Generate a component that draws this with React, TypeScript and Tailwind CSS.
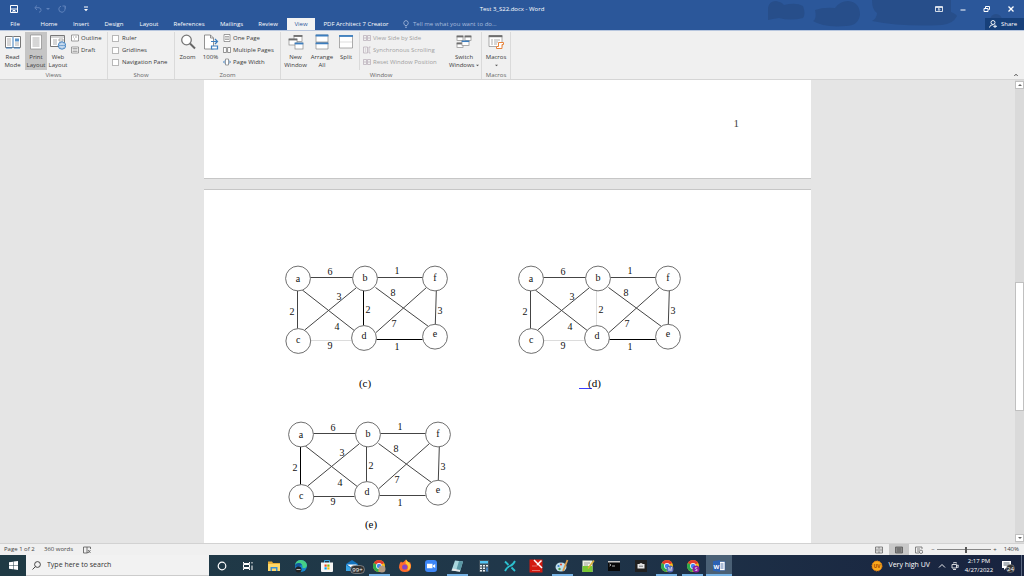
import type { ReactNode } from "react";
import clsx from "clsx";

// x, y of the circle, then the baseline of its letter
const nodes: Record<string, [number, number, number]> = {
  a: [14, 16.5, 19.5],
  b: [81, 16.5, 19],
  f: [151, 16.5, 19],
  c: [14.3, 79, 81],
  d: [80, 76, 77],
  e: [151, 74.7, 75],
};

const edges: Record<string, [number, number, number, number]> = {
  ab: [26.5, 15.5, 68.5, 15.5],
  bf: [93.5, 15.5, 138.5, 15.5],
  ac: [13.5, 29, 13.5, 66.5],
  bd: [79.5, 29, 79.5, 63.5],
  de: [92.5, 77.5, 138.5, 77.5],
  cd: [27, 78.5, 67.5, 78.5],
  fe: [152.3, 29, 151.3, 62],
  ad: [18.3, 28, 70, 68.3],
  cb: [20.7, 68, 72, 26],
  be: [91.5, 25.5, 144.5, 64.5],
  fd: [142.5, 25.5, 92, 70.5],
};

const weights: [string, number, number][] = [
  ["6", 46, 13],
  ["1", 113, 12],
  ["8", 109, 34],
  ["3", 55, 38],
  ["2", 8, 53],
  ["2", 84, 51],
  ["4", 53, 68],
  ["7", 110, 65],
  ["9", 46, 87],
  ["1", 113, 88],
  ["3", 156, 52],
];

const Graph = ({ faint = [], bold = [] }: { faint?: string[]; bold?: string[] }) => (
  <svg className="block w-[168px] h-[96px]" viewBox="0 0 168 96">
    {Object.entries(edges).map(([name, [x1, y1, x2, y2]]) => (
      <line
        key={name}
        x1={x1}
        y1={y1}
        x2={x2}
        y2={y2}
        stroke={
          faint.includes(name) ? "#dcdcdc" : bold.includes(name) ? "#000" : "#444"
        }
        strokeWidth="1"
      />
    ))}
    {Object.entries(nodes).map(([name, [x, y, baseline]]) => (
      <g key={name}>
        <circle cx={x} cy={y} r="12.4" fill="#fff" stroke="#4a4a4a" strokeWidth="0.8" />
        <text
          x={x}
          y={baseline}
          textAnchor="middle"
          className="text-[10px]"
          fill="#111"
        >
          {name}
        </text>
      </g>
    ))}
    {weights.map(([label, x, y]) => (
      <text
        key={`${x}-${y}`}
        x={x}
        y={y}
        textAnchor="middle"
        className="text-[10px]"
        fill="#111"
      >
        {label}
      </text>
    ))}
  </svg>
);

/* ---------- title bar and tabs ---------- */

const TitleBar = () => (
  <div className="relative grid grid-cols-3 h-[18px] items-center text-white">
    <div className="flex items-center pl-0.5">
      <button aria-label="Save" className="flex w-6 justify-center">
        <svg className="w-2 h-2" viewBox="0 0 8 8" fill="none" stroke="#fff">
          <path d="M.5.5h7v7h-7zM.5 4h7M3 7.500v-2h2v2" />
        </svg>
      </button>
      <button aria-label="Undo" className="flex w-6 items-center gap-1 pl-2">
        <svg className="w-2 h-2 shrink-0" viewBox="0 0 8 8" fill="none" stroke="#5f82bb">
          <path d="M3 .5L.8 2.700 3 5M1 2.700h4q2.500.3 2 3-.4 1.300-2 1.500" />
        </svg>
        <svg className="w-1 h-1 shrink-0" viewBox="0 0 4 4" fill="#5f82bb">
          <path d="M0 1h4L2 3z" />
        </svg>
      </button>
      <button aria-label="Redo" className="flex w-6 justify-center">
        <svg className="w-2 h-2" viewBox="0 0 8 8" fill="none" stroke="#5f82bb">
          <path d="M4.500 1H7.300V3.800M7 1.300Q7.800 6.800 4 7.300.6 7 .8 4 1 1.800 3 1.200" />
        </svg>
      </button>
      <button
        aria-label="Customize Quick Access Toolbar"
        className="flex w-6 justify-center"
      >
        <svg className="w-1 h-1.5" viewBox="0 0 4 6" fill="#fff">
          <path d="M0 .5h4v1H0zM0 3h4L2 5.200z" />
        </svg>
      </button>
    </div>
    <h1 className="text-center text-[6px]">Test 3_S22.docx - Word</h1>
    <div className="flex items-center justify-end gap-4 pr-[9px]">
      <button aria-label="Ribbon Display Options">
        <svg className="w-2 h-2" viewBox="0 0 8 8" fill="none" stroke="#fff">
          <path d="M.5 1.500h7v5h-7zM.5 2.500h7M4 6V3.500M2.800 4.700L4 3.500l1.200 1.200" strokeWidth=".8" />
        </svg>
      </button>
      <button aria-label="Minimize">
        <svg className="w-2 h-2" viewBox="0 0 8 8" fill="none" stroke="#fff">
          <path d="M1.500 5h5" />
        </svg>
      </button>
      <button aria-label="Restore">
        <svg className="w-2 h-2" viewBox="0 0 8 8" fill="none" stroke="#fff">
          <path d="M1 3.500h4v3H1zM2.500 3V1.500h4v3H5.500" />
        </svg>
      </button>
      <button aria-label="Close">
        <svg className="w-2 h-2" viewBox="0 0 8 8" fill="none" stroke="#fff">
          <path d="M1.500 1.500l5 5M6.500 1.500l-5 5" strokeWidth="1.300" />
        </svg>
      </button>
    </div>
  </div>
);

const tabs = [
  { name: "File", width: "w-[30px]" },
  { name: "Home", width: "w-[38px]" },
  { name: "Insert", width: "w-[26px]" },
  { name: "Design", width: "w-[40px]" },
  { name: "Layout", width: "w-[30px]" },
  { name: "References", width: "w-[50px]" },
  { name: "Mailings", width: "w-[35px]" },
  { name: "Review", width: "w-[38px]" },
  { name: "View", width: "w-[28px]" },
  { name: "PDF Architect 7 Creator", width: "w-[82px]" },
];

const Tabs = () => (
  <nav className="relative flex h-3 text-[6px] text-white">
    {tabs.map((tab) => (
      <button
        key={tab.name}
        className={clsx(
          "shrink-0 whitespace-nowrap leading-3",
          tab.width,
          tab.name === "View" && "bg-[#f3f3f3] text-[#2b579a]"
        )}
      >
        {tab.name}
      </button>
    ))}
    <button className="flex items-center gap-1 pl-1.5 text-[#a9bddd]">
      <svg className="w-1.5 h-2" viewBox="0 0 6 8" fill="none" stroke="currentColor">
        <path d="M2 5.500Q.5 4 .8 2.500 1.300.6 3 .6T5.200 2.500Q5.500 4 4 5.500zM2 7.200h2" strokeWidth=".8" />
      </svg>
      Tell me what you want to do...
    </button>
    <button className="ml-auto flex w-[39px] items-center gap-1 bg-[#17407a] pl-1">
      <svg className="w-2 h-2" viewBox="0 0 8 8" fill="none" stroke="#fff" strokeWidth=".9">
        <circle cx="4" cy="2.500" r="2" />
        <path d="M.5 7.500Q.8 4.800 4 4.700M6 4.500v3.500M4.200 6.300H8" />
      </svg>
      Share
    </button>
  </nav>
);

/* ---------- ribbon ---------- */

const Caret = () => (
  <svg className="inline-block w-[3px] h-[3px]" viewBox="0 0 4 4" fill="#555">
    <path d="M0 1h4L2 3z" />
  </svg>
);

const Group = ({
  label,
  className,
  children,
}: {
  label: string;
  className: string;
  children: ReactNode;
}) => (
  <section
    className={clsx("flex shrink-0 flex-col border-r border-[#dadada]", className)}
  >
    <div className="flex h-[38px]">{children}</div>
    <h2 className="pt-px text-center leading-[8px] text-[#666]">{label}</h2>
  </section>
);

const BigButton = ({
  lines,
  width,
  active,
  children,
}: {
  lines: ReactNode[];
  width: string;
  active?: boolean;
  children: ReactNode;
}) => (
  <button
    className={clsx(
      "flex shrink-0 flex-col items-center gap-[3px] whitespace-nowrap pt-0.5 leading-[8px]",
      width,
      active && "bg-[#c5c5c5]"
    )}
  >
    <svg className="block w-4 h-4 shrink-0" viewBox="0 0 16 16" fill="none">
      {children}
    </svg>
    <span>
      {lines.map((line, i) => (
        <span key={i} className="block">
          {line}
        </span>
      ))}
    </span>
  </button>
);

const SmallButton = ({
  label,
  disabled,
  children,
}: {
  label: string;
  disabled?: boolean;
  children: ReactNode;
}) => (
  <button
    disabled={disabled}
    className={clsx(
      "flex h-3 items-center gap-0.5 whitespace-nowrap",
      disabled && "text-[#a0a0a0]"
    )}
  >
    <svg className="w-2 h-2 shrink-0" viewBox="0 0 8 8" fill="none">
      {children}
    </svg>
    {label}
  </button>
);

const Windowed = ({ x, y, w, h }: { x: number; y: number; w: number; h: number }) => (
  <>
    <rect x={x} y={y} width={w} height={h} fill="#fff" stroke="#8a8a8a" strokeWidth=".7" />
    <path d={`M${x - 0.3} ${y + 0.5}h${w + 0.6}`} stroke="#6e6e6e" strokeWidth="1.800" />
  </>
);

const Ribbon = () => (
  <div className="flex h-[50px] shrink-0 border-y border-t-[#b7c6de] border-b-[#d5d5d5] bg-[#f0f0f0] pt-px text-[6px] text-[#3a3a3a]">
    <Group label="Views" className="w-[108px]">
      <BigButton lines={["Read", "Mode"]} width="w-[25px]">
        <path d="M.5 2.500h7l.5.500.5-.5h7v11h-7l-.5.500-.5-.5h-7z" fill="#fff" stroke="#777" />
        <path d="M8 3v11" stroke="#3c7ebf" />
        <path d="M2 5h4M2 7h4M2 9h4M2 11h4M10 9h4M10 11h4" stroke="#9a9a9a" strokeWidth=".8" />
        <path d="M10 4.500h4v3h-4z" fill="#5a94cb" />
        <path d="M1 14h6M9 14h6" stroke="#3c7ebf" />
      </BigButton>
      <BigButton lines={["Print", "Layout"]} width="w-[22px]" active>
        <path d="M2.500 1h11v14h-11z" fill="#fff" stroke="#8a8a8a" strokeWidth=".7" />
        <path d="M4.500 4h7M4.500 6h7M4.500 8h7M4.500 10h7M4.500 12h7" stroke="#999" strokeWidth=".8" />
      </BigButton>
      <BigButton lines={["Web", "Layout"]} width="w-[22px]">
        <path d="M.5 1.500h14v11H.5z" fill="#fff" stroke="#777" />
        <path d="M1 3h13M3 6h4M3 8h4M3 10h4M9 5h4v2H9z" stroke="#999" strokeWidth=".8" />
        <circle cx="12" cy="11.500" r="3.700" fill="#fff" stroke="#3c7ebf" />
        <path d="M8.500 11.500h7M12 8v7M10.300 9q-1 2.500 0 5M13.700 9q1 2.500 0 5" stroke="#3c7ebf" strokeWidth=".6" />
      </BigButton>
      <div className="flex flex-col pl-0.5">
        <SmallButton label="Outline">
          <path d="M.5 1h7v6h-7z" fill="#fff" stroke="#777" strokeWidth=".7" />
          <path d="M2 3h1M4 3h2M3 5h1" stroke="#888" strokeWidth=".7" />
        </SmallButton>
        <SmallButton label="Draft">
          <path d="M.5 1h7v6h-7z" fill="#fff" stroke="#777" strokeWidth=".7" />
          <path d="M1.500 2.500h5M1.500 4h5M1.500 5.500h5" stroke="#888" strokeWidth=".7" />
        </SmallButton>
      </div>
    </Group>

    <Group label="Show" className="w-[67px]">
      <div className="flex flex-col pl-1">
        {["Ruler", "Gridlines", "Navigation Pane"].map((item) => (
          <label key={item} className="flex h-3 items-center gap-[3px] whitespace-nowrap">
            <input
              type="checkbox"
              className="h-[7px] w-[7px] appearance-none border border-[#b8b8b8] bg-white"
            />
            {item}
          </label>
        ))}
      </div>
    </Group>

    <Group label="Zoom" className="w-[106px]">
      <BigButton lines={["Zoom"]} width="w-[25px]">
        <circle cx="6.500" cy="6" r="4.800" fill="#fff" stroke="#777" strokeWidth="1.300" />
        <path d="M10 9.500l5 5" stroke="#666" strokeWidth="2" />
      </BigButton>
      <BigButton lines={["100%"]} width="w-[21px]">
        <path d="M1.500 1h6l3 3v11h-9z" fill="#fff" stroke="#777" strokeWidth=".8" />
        <path d="M7.500 1v3h3" stroke="#777" strokeWidth=".8" />
        <path d="M8 7.500h6M12 5l2.500 2.500L12 10" stroke="#3c7ebf" strokeWidth="1.200" />
        <path d="M8.500 12h6v3h-6z" fill="#fff" stroke="#3c7ebf" strokeWidth="1.200" />
      </BigButton>
      <div className="flex flex-col pl-0.5">
        <SmallButton label="One Page">
          <path d="M1 .5h6v7H1z" fill="#fff" stroke="#777" strokeWidth=".7" />
          <path d="M2 2.500h4M2 4h4M2 5.500h4" stroke="#888" strokeWidth=".7" />
        </SmallButton>
        <SmallButton label="Multiple Pages">
          <path d="M.4 1.500h3v5h-3zM4.600 1.500h3v5h-3z" fill="#fff" stroke="#666" strokeWidth=".7" />
        </SmallButton>
        <SmallButton label="Page Width">
          <path d="M2.500 1h3v6h-3z" fill="#fff" stroke="#777" strokeWidth=".7" />
          <path d="M2 2.500L.5 4 2 5.500M6 2.500L7.500 4 6 5.500" stroke="#3c7ebf" />
        </SmallButton>
      </div>
    </Group>

    <Group label="Window" className="w-[201px]">
      <BigButton lines={["New", "Window"]} width="w-[29px]">
        <Windowed x={6} y={1.5} w={8} h={6} />
        <Windowed x={1} y={5} w={8} h={6} />
        <rect x="7" y="9" width="8" height="6" fill="#fff" stroke="#8a8a8a" strokeWidth=".7" />
        <path d="M6.700 9.500h8.600" stroke="#3c7ebf" strokeWidth="1.800" />
      </BigButton>
      <BigButton lines={["Arrange", "All"]} width="w-[24px]">
        <path d="M2 1h12v7H2zM2 8.500h12v6.500H2z" fill="#fff" stroke="#8a8a8a" strokeWidth=".7" />
        <path d="M1.600 1.500h12.800M1.600 9.300h12.800" stroke="#3c7ebf" strokeWidth="1.800" />
      </BigButton>
      <BigButton lines={["Split"]} width="w-[24px]">
        <path d="M1.500 1.500h13v12.500h-13z" fill="#fff" stroke="#8a8a8a" strokeWidth=".7" />
        <path d="M1 2h14" stroke="#3c7ebf" strokeWidth="1.800" />
        <path d="M2 8h12" stroke="#ddd" />
      </BigButton>
      <div className="ml-px flex w-[94px] flex-col border-l border-[#dadada] pl-[3px]">
        <SmallButton label="View Side by Side" disabled>
          <path d="M.5 1.500h3v5h-3zM4.500 1.500h3v5h-3zM2 3v2M6 3v2" stroke="#b5a9b5" strokeWidth=".7" />
        </SmallButton>
        <SmallButton label="Synchronous Scrolling" disabled>
          <path d="M.5 1h4v6h-4zM6 1h1.500M6 7h1.500M6 1v6M2 3h1M2 5h1" stroke="#b5a9b5" strokeWidth=".7" />
        </SmallButton>
        <SmallButton label="Reset Window Position" disabled>
          <path d="M.5 1.500h3v5h-3zM4.500 1.500h3v5h-3zM1 4h2M5 4h2" stroke="#b5a9b5" strokeWidth=".7" />
        </SmallButton>
      </div>
      <BigButton
        lines={[
          "Switch",
          <>
            Windows <Caret />
          </>,
        ]}
        width="w-[22px]"
      >
        <Windowed x={1} y={2} w={6} h={4.5} />
        <Windowed x={9} y={2} w={6} h={4.5} />
        <Windowed x={1} y={9} w={6} h={4.5} />
        <rect x="6" y="7" width="7" height="4.500" fill="#fff" stroke="#8a8a8a" strokeWidth=".7" />
        <path d="M5.700 7.300h7.600" stroke="#3c7ebf" strokeWidth="1.500" />
      </BigButton>
    </Group>

    <Group label="Macros" className="w-[29px]">
      <BigButton lines={["Macros", <Caret />]} width="w-[28px]">
        <path d="M1 1.500h13v11H1z" fill="#fff" stroke="#8a8a8a" strokeWidth=".7" />
        <path d="M.7 2.200h13.600" stroke="#6e6e6e" strokeWidth="2" />
        <path d="M3 6h2M6 6h6M3 8h2M6 8h4M3 10h2M6 10h3" stroke="#999" strokeWidth=".8" />
        <path d="M10.500 8.500h5v2h-1.500v4H8.500v-2h2z" fill="#fff" stroke="#e8833a" />
      </BigButton>
    </Group>

    <button aria-label="Collapse the Ribbon" className="mb-0.5 ml-auto mr-1.5 self-end">
      <svg className="w-1 h-1" viewBox="0 0 4 4" fill="none" stroke="#555">
        <path d="M.3 3L2 1.200 3.700 3" />
      </svg>
    </button>
  </div>
);

/* ---------- document ---------- */

const VerticalScroll = () => (
  <div className="flex w-[9px] shrink-0 flex-col bg-[#dadada] py-px">
    <button aria-label="Scroll up" className="flex h-2 items-center justify-center border border-[#c0c0c0] bg-white">
      <svg className="w-1 h-1" viewBox="0 0 4 4" fill="#666">
        <path d="M0 3h4L2 1z" />
      </svg>
    </button>
    <div className="flex-[193]" />
    <div className="flex-[128] border border-[#c0c0c0] bg-white" />
    <div className="flex-[123]" />
    <button aria-label="Scroll down" className="flex h-2 items-center justify-center border border-[#c0c0c0] bg-white">
      <svg className="w-1 h-1" viewBox="0 0 4 4" fill="#666">
        <path d="M0 1h4L2 3z" />
      </svg>
    </button>
  </div>
);

const Document = () => (
  <main className="flex min-h-0 flex-1 overflow-hidden bg-[#e5e5e5]">
    <div className="flex min-w-0 flex-1 flex-col items-center gap-2.5 overflow-hidden font-['Liberation_Serif',serif] text-[11px] text-black">
      <div className="flex h-[99px] w-[59.8%] shrink-0 items-start justify-end border-b border-[#c6c6c6] bg-white pr-[72px] pt-9 leading-[14px] text-[#444]">
        1
      </div>
      <div className="w-[59.8%] flex-1 border-t border-[#c6c6c6] bg-white pt-[72px]">
        <div className="flex gap-[65px] pl-20">
          <figure>
            <Graph faint={["cd"]} bold={["bd", "de"]} />
            <figcaption className="w-[162px] pt-[19px] text-center leading-3">(c)</figcaption>
          </figure>
          <figure>
            <Graph faint={["cd", "bd"]} bold={["de"]} />
            <figcaption className="w-[162px] pr-4 pt-[19px] text-center leading-3">
              <span className="-mr-1 inline-block h-3 w-[13px] border-b border-[#3b3bff] align-bottom" />
              (d)
            </figcaption>
          </figure>
        </div>
        <div className="flex pl-[83px] pt-[29px]">
          <figure>
            <Graph bold={["ac"]} />
            <figcaption className="w-[168px] pt-1 text-center leading-3">(e)</figcaption>
          </figure>
        </div>
      </div>
    </div>
    <VerticalScroll />
  </main>
);

const StatusBar = () => (
  <footer className="flex h-3 shrink-0 items-center border-t border-[#d2d2d2] bg-[#f0f0f0] pl-1 text-[6px] text-[#444]">
    <span className="w-10">Page 1 of 2</span>
    <span className="w-[39px]">360 words</span>
    <svg className="w-2 h-2" viewBox="0 0 8 8" fill="none" stroke="#555" strokeWidth=".8">
      <path d="M.5 1h3.500v6H.5zM4 1h3.500v2M4 7l1-.5M5 4l2.500 3M7.500 4L5 7" />
    </svg>
    <div className="ml-auto flex items-center self-stretch pr-[5px]">
      <button aria-label="Read Mode" className="flex w-5 justify-center">
        <svg className="w-2 h-2" viewBox="0 0 8 8" fill="none" stroke="#666" strokeWidth=".8">
          <path d="M.5 1H4v6H.5zM4 1h3.500v6H4M2 2.500v3M6 2.500v3" />
        </svg>
      </button>
      <button aria-label="Print Layout" className="flex w-5 items-center justify-center self-stretch bg-[#c8c8c8]">
        <svg className="w-2 h-2" viewBox="0 0 8 8" fill="#888" stroke="#555" strokeWidth=".8">
          <path d="M.5 1h7v6h-7zM2 3h4M2 5h4" />
        </svg>
      </button>
      <button aria-label="Web Layout" className="flex w-5 justify-center">
        <svg className="w-2 h-2" viewBox="0 0 8 8" fill="none" stroke="#666" strokeWidth=".8">
          <path d="M4 7H.5V1h6.500v2M2 3h3M2 5h2" />
          <circle cx="6" cy="5.800" r="1.700" />
        </svg>
      </button>
      <button aria-label="Zoom out" className="w-2 leading-3">−</button>
      <input
        type="range"
        aria-label="Zoom"
        min="10"
        max="270"
        defaultValue="150"
        className="h-px w-[54px] appearance-none bg-[#888] [&::-webkit-slider-thumb]:h-[6px] [&::-webkit-slider-thumb]:w-[2px] [&::-webkit-slider-thumb]:appearance-none [&::-webkit-slider-thumb]:bg-[#555]"
      />
      <button aria-label="Zoom in" className="w-2 leading-3">+</button>
      <span className="w-5 text-right">140%</span>
    </div>
  </footer>
);

/* ---------- taskbar ---------- */

const Chrome = ({ badge, letter }: { badge?: string; letter?: string }) => (
  <>
    <circle cx="7" cy="7" r="6" fill="#fbc116" />
    <path d="M7 7L1.800 4A6 6 0 0 1 12.200 4z" fill="#e33b2e" />
    <path d="M7 7L1.800 4A6 6 0 0 0 6.500 13z" fill="#2da94f" />
    <circle cx="7" cy="7" r="2.900" fill="#fff" />
    <circle cx="7" cy="7" r="2.200" fill="#4285f4" />
    {badge && <circle cx="10" cy="10" r="3.500" fill={badge} />}
    {letter && (
      <text x="10" y="12" textAnchor="middle" className="text-[5px]" fill="#fff">
        {letter}
      </text>
    )}
  </>
);

const apps: { name: string; state?: "open" | "active"; icon: ReactNode }[] = [
  {
    name: "Cortana",
    icon: <circle cx="7" cy="7" r="3.800" fill="none" stroke="#fff" strokeWidth="1.200" />,
  },
  {
    name: "Task View",
    icon: (
      <path d="M2.500 3v1.500h6V3M2.500 11V9.500h6V11M2.500 5.500h6v3h-6zM11 3v1.500M11 6.500v4.500" fill="none" stroke="#fff" />
    ),
  },
  {
    name: "File Explorer",
    icon: (
      <>
        <path d="M1 2.500h4l1 1.500h7v8H1z" fill="#e9ae36" />
        <path d="M1 5h12v7H1z" fill="#ffd969" />
        <path d="M3.500 12V8h7v4H9V9.500H5V12z" fill="#3c8fd6" />
      </>
    ),
  },
  {
    name: "Edge",
    icon: (
      <>
        <circle cx="7" cy="7" r="6" fill="#1687ce" />
        <path d="M1 6Q2 1 7 1q5.500.5 6 5.500-.5 3-4.500 2.500Q9 4.500 5 4 2 4 1 6z" fill="#45cf87" />
        <path d="M1 7q1-3 4-3 2 .2 3 2-3 0-2.500 3z" fill="#14589c" />
        <circle cx="4.500" cy="10.500" r="3" fill="#222" />
        <path d="M2.500 10.500h4" stroke="#bbb" />
      </>
    ),
  },
  {
    name: "Microsoft Store",
    icon: (
      <>
        <path d="M4.500 4V1.500h5V4" fill="none" stroke="#39a6dd" />
        <path d="M1 3.500h12V12q0 1-1 1H2q-1 0-1-1z" fill="#f5f5f5" />
        <path d="M4.500 5.500h2.200v2.200H4.500z" fill="#f25022" />
        <path d="M7.300 5.500h2.200v2.200H7.300z" fill="#7fba00" />
        <path d="M4.500 8.300h2.200v2.200H4.500z" fill="#00a4ef" />
        <path d="M7.300 8.300h2.200v2.200H7.300z" fill="#ffb900" />
      </>
    ),
  },
  {
    name: "Mail",
    icon: (
      <>
        <path d="M0 5l6-4 6 4v7H0z" fill="#1172be" />
        <path d="M1 5.500h10L6 9z" fill="#fff" />
        <path d="M0 6l6 4 6-4v6H0z" fill="#39a5e8" />
        <rect x="4.500" y="6.500" width="14" height="8" rx="4" fill="#333" stroke="#aaa" strokeWidth=".6" />
        <text x="11.500" y="12.500" textAnchor="middle" className="text-[6px]" fill="#fff">
          99+
        </text>
      </>
    ),
  },
  { name: "Google Chrome", state: "open", icon: <Chrome badge="#b49b83" /> },
  {
    name: "Firefox",
    icon: (
      <>
        <path d="M2 4l1-1.500 1 1Q6 3 8 .5q1 2 3 3l1-.5q1.500 3 1 5.500-1 4.500-6 4.500T1 8.500Q1 6 2 4z" fill="#ff6b2c" />
        <path d="M8 .5q1 2 3 3 2.500 3 1 6-1 1.500-3 2 2-2 1-4.500Q9 5 7.500 4.500z" fill="#ffc832" />
        <circle cx="6.700" cy="8" r="2.600" fill="#8547c7" />
      </>
    ),
  },
  {
    name: "Zoom",
    icon: (
      <>
        <rect x="1" y="1" width="12" height="12" rx="3" fill="#3d86f7" />
        <path d="M3 4.800h5.500v4.500H3zM9 6.500l2.200-1.500v4L9 7.700z" fill="#fff" />
      </>
    ),
  },
  {
    name: "Notepad",
    state: "open",
    icon: (
      <>
        <path d="M5 1.500l8 1-3 10-8.500-1z" fill="#a8d5dc" />
        <path d="M9 2l4 .5-3 10-4-.5z" fill="#5a98a5" />
        <path d="M1.500 11.500l1.500-2 7 1.500v1.700z" fill="#e8e8e8" />
      </>
    ),
  },
  {
    name: "Calculator",
    icon: (
      <>
        <path d="M2 1h10v12H2z" fill="#3e4f5c" />
        <path d="M3 2h8v2.500H3z" fill="#53c3f2" />
        <path d="M3 6h2v1.600H3zM6 6h2v1.600H6zM9 6h2v1.600H9zM3 8.500h2v1.600H3zM6 8.500h2v1.600H6zM3 11h2v1.500H3zM6 11h2v1.500H6z" fill="#e8eef2" />
        <path d="M9 8.500h2v4H9z" fill="#4c86c0" />
      </>
    ),
  },
  {
    name: "X",
    icon: (
      <path d="M2 2.500l3.500 3.500M8.500 8.500L12 12M12 2q-2 4-5 5t-5 5" fill="none" stroke="#2cc0cf" strokeWidth="1.800" />
    ),
  },
  {
    name: "PDF Architect",
    icon: (
      <>
        <path d="M.5.5h13v13H.5z" fill="#d3190f" />
        <path d="M5 1l8 8M12.500 1.500L8 6" stroke="#fff" strokeWidth="1.500" />
        <path d="M3 7h5M3 11.500h8" stroke="#ee8580" strokeWidth=".8" />
      </>
    ),
  },
  {
    name: "Paint",
    state: "open",
    icon: (
      <>
        <ellipse cx="6" cy="8" rx="5.500" ry="4.500" fill="#bfe0ee" />
        <circle cx="3.500" cy="7" r="1.100" fill="#3b80c8" />
        <circle cx="6" cy="5.500" r="1.100" fill="#e4553d" />
        <circle cx="4.500" cy="10" r="1.200" fill="#4f9e48" />
        <path d="M12.500 1L8 12" stroke="#d99a4d" strokeWidth="1.800" />
      </>
    ),
  },
  {
    name: "Notepad++",
    icon: (
      <>
        <path d="M1.500 1.500h10V13h-10z" fill="#f0f3e5" />
        <path d="M1.500 7h10v6h-10z" fill="#79c833" />
        <path d="M3 4h6M3 6h4" stroke="#888" strokeWidth=".8" />
        <path d="M13 1.500L7 9.500" stroke="#d9b13b" strokeWidth="1.500" />
      </>
    ),
  },
  {
    name: "Command Prompt",
    icon: (
      <>
        <path d="M1 2h12v10H1z" fill="#080808" />
        <path d="M1 2h12v1.500H1z" fill="#c8c8c8" />
        <path d="M2.500 5l1.500 1-1.500 1M5 7h3" fill="none" stroke="#ddd" strokeWidth=".8" />
      </>
    ),
  },
  {
    name: "Snip",
    icon: (
      <>
        <path d="M1 1h12v12H1z" fill="#202020" />
        <path d="M3.500 5h2l.5-.7h2l.5.700h2V9.500h-7z" fill="#e8e8e8" />
        <path d="M5 7.200h4" stroke="#777" />
      </>
    ),
  },
  { name: "Chrome (M)", state: "open", icon: <Chrome badge="#5566b8" letter="M" /> },
  { name: "Chrome (S)", state: "open", icon: <Chrome badge="#8a1d9e" letter="S" /> },
  {
    name: "Word",
    state: "active",
    icon: (
      <>
        <path d="M7 2.500h6v9H7z" fill="#fff" stroke="#2b579a" strokeWidth=".6" />
        <path d="M8.500 5h3M8.500 7h3M8.500 9h3" stroke="#2b579a" strokeWidth=".8" />
        <path d="M1 2.200L8 1v12l-7-1.200z" fill="#2b62b5" />
        <text x="4.500" y="9.500" textAnchor="middle" className="text-[6px] font-bold" fill="#fff">
          W
        </text>
      </>
    ),
  },
];

const Taskbar = () => (
  <div className="flex h-[21px] shrink-0 items-stretch bg-linear-to-r from-[#1f3a44] via-[#20374a] to-[#18233f] text-[7px] text-white">
    <button aria-label="Start" className="flex w-[26px] shrink-0 items-center justify-center">
      <svg className="w-[9px] h-[9px]" viewBox="0 0 9 9" fill="#fff">
        <path d="M0 1.200L4 .7v3.500H0zM4.500.6L9 0v4.200H4.500zM0 4.700h4v3.500L0 7.700zM4.500 4.700H9V9l-4.500-.7z" />
      </svg>
    </button>
    <label className="flex w-[183px] shrink-0 items-center gap-1.5 border-b border-[#ccc] bg-[#f2f2f2] pl-1.5">
      <svg className="w-[9px] h-[9px] shrink-0" viewBox="0 0 9 9" fill="none" stroke="#333" strokeWidth=".9">
        <circle cx="5.500" cy="3.500" r="2.900" />
        <path d="M3.400 5.600L.5 8.500" />
      </svg>
      <input
        type="text"
        aria-label="Search"
        placeholder="Type here to search"
        className="w-full bg-transparent text-[7px] outline-none placeholder:text-[#333]"
      />
    </label>
    <div className="flex w-[523px] shrink-0">
      {apps.map((app) => (
        <button
          key={app.name}
          aria-label={app.name}
          className={clsx(
            "flex flex-1 flex-col items-center justify-between pt-1",
            app.state === "active" && "bg-[#4a6075]"
          )}
        >
          <svg className="block w-3.5 h-3.5 overflow-visible" viewBox="0 0 14 14">
            {app.icon}
          </svg>
          {app.state && (
            <span
              className={clsx(
                "h-0.5 bg-[#76b2e4]",
                app.state === "active" ? "w-full" : "w-[21px]"
              )}
            />
          )}
        </button>
      ))}
    </div>
    <div className="ml-auto flex items-center whitespace-nowrap pr-0.5">
      <button className="flex items-center gap-[5px]">
        <svg className="w-3 h-3" viewBox="0 0 12 12">
          <circle cx="6" cy="6" r="5" fill="#fba91c" stroke="#f07d12" strokeDasharray="1.500 1" />
          <text x="6" y="8" textAnchor="middle" className="text-[5px] font-bold" fill="#a34100">
            UV
          </text>
        </svg>
        Very high UV
      </button>
      <button aria-label="Show hidden icons" className="ml-2">
        <svg className="w-2 h-2" viewBox="0 0 8 8" fill="none" stroke="#fff" strokeWidth=".9">
          <path d="M1 5.500l3-3 3 3" />
        </svg>
      </button>
      <button aria-label="Meet Now" className="ml-[5px]">
        <svg className="w-2 h-2" viewBox="0 0 8 8" fill="none" stroke="#fff" strokeWidth=".8">
          <path d="M1 2.500h4.500v3.500H1zM5.500 3.500L7.200 3v2.500L5.500 5M2 1q2-1 4 0M2 7.500h3" />
        </svg>
      </button>
      <div className="w-10 text-center text-[6px] leading-[9px]">
        <div>2:17 PM</div>
        <div>4/27/2022</div>
      </div>
      <button aria-label="Notifications" className="ml-px">
        <svg className="w-4 h-4" viewBox="0 0 16 16">
          <path d="M2 3h9v7H6l-2 2v-2H2z" fill="#fff" />
          <path d="M3.500 5h6M3.500 7h6" stroke="#345" strokeWidth=".8" />
          <circle cx="10.500" cy="10.500" r="4" fill="#333" stroke="#999" strokeWidth=".5" />
          <text x="10.500" y="12.500" textAnchor="middle" className="text-[6px]" fill="#fff">
            24
          </text>
        </svg>
      </button>
      <div className="ml-[5px] h-[21px] w-px bg-[#5b6880]" />
    </div>
  </div>
);

export default function App() {
  return (
    <div className="flex h-screen flex-col overflow-hidden bg-[#e5e5e5] font-['Open_Sans','Noto_Sans',sans-serif]">
      <header className="relative shrink-0 bg-[#2b579a]">
        <svg
          className="absolute right-0 top-0 h-[30px] w-[284px]"
          viewBox="0 0 284 30"
          fill="#274e8a"
        >
          <path d="M28 20V8Q29 1 36 1q6 1 8 4 12-3 19 1 3 8 0 12-13 3-24 0-7 1-11 2z" />
          <path d="M75 10q8-3 20-2 5-7 13-7 12 1 12 14-2 11-14 11-22 2-33-5 4-2 2-11z" />
          <path d="M132 0h79v12q5 2 6 4-4 8-15 9-40 2-70-4 5-3 5-8-5-3-5-13z" />
          <circle cx="256" cy="20" r="6" />
        </svg>
        <TitleBar />
        <Tabs />
      </header>
      <Ribbon />
      <Document />
      <StatusBar />
      <Taskbar />
    </div>
  );
}
